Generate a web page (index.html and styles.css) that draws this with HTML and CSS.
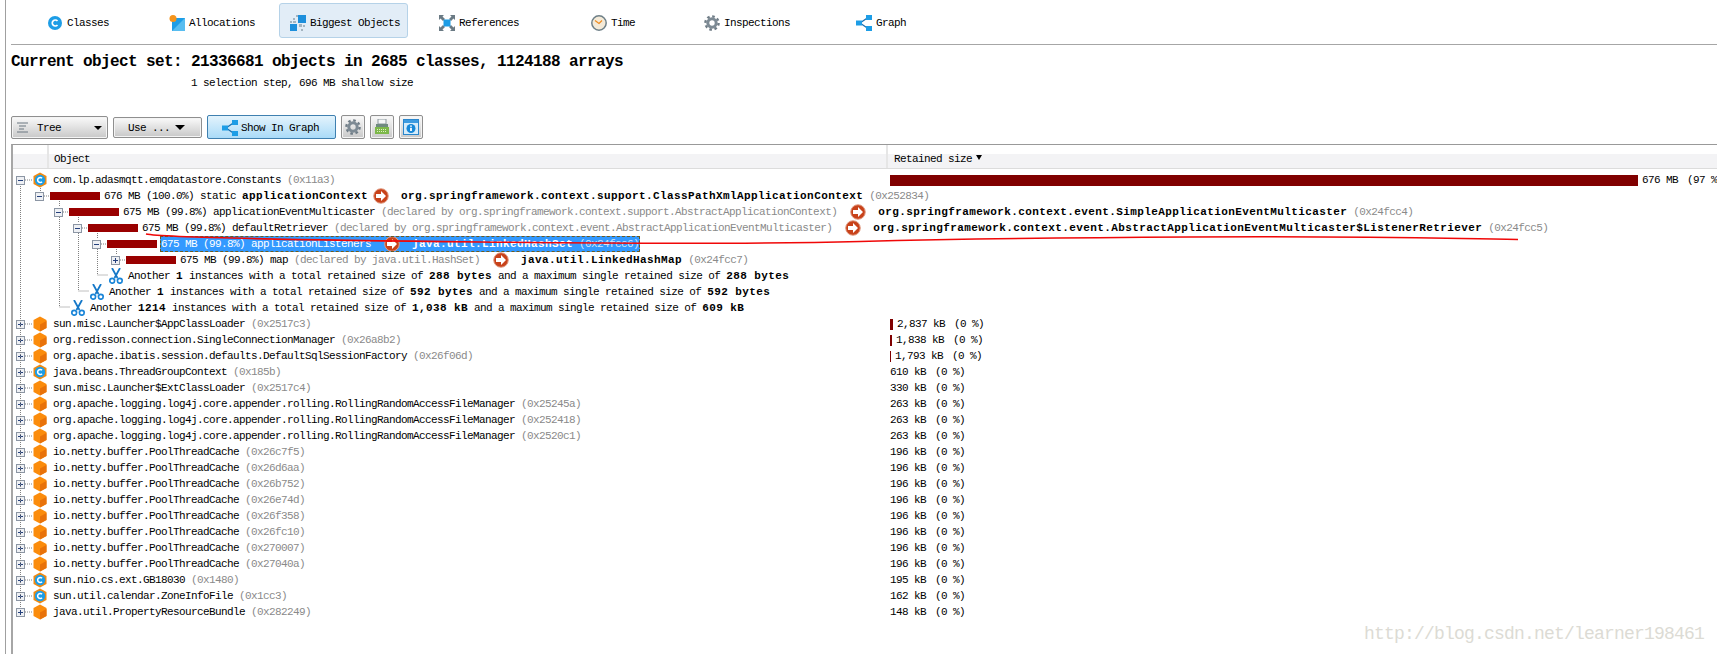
FILE: index.html
```html
<!doctype html>
<html>
	<head>
		<title>Biggest Objects</title>
		<meta charset="utf8">
		<link rel="stylesheet" href="styles.css">
	</head>
	<body>
		<svg class="defs">
			<symbol id="class-hex" viewBox="0 0 16 16">
				<path d="M8 .5 14.5 4v8L8 15.5 1.500 12V4z" fill="#f08a12"/>
				<circle cx="8" cy="8" r="5.200" fill="#1d9de6"/>
				<path d="M10 6.300A2.500 2.500 0 1 0 10 9.700" fill="none" stroke="#fff" stroke-width="1.600"/>
			</symbol>
			<symbol id="cube" viewBox="0 0 16 16">
				<path d="M8 .5 14.500 4v8L8 15.500 1.500 12V4z" fill="#fb8c0c"/>
				<path d="M14.500 5 8 8.500v7l6.500-3.500z" fill="#e8720a"/>
			</symbol>
			<symbol id="scissors" viewBox="0 0 16 16">
				<path d="M4 0 9.500 10M12 0 6.500 10" fill="none" stroke="#1578c8" stroke-width="1.800"/>
				<circle cx="4.200" cy="12.800" r="2.400" fill="#fff" stroke="#1c86d8" stroke-width="1.700"/>
				<circle cx="11.800" cy="12.800" r="2.400" fill="#fff" stroke="#1c86d8" stroke-width="1.700"/>
			</symbol>
			<symbol id="ref-arrow" viewBox="0 0 16 16">
				<circle cx="8" cy="8" r="7.300" fill="#c8421a" stroke="#e2a088" stroke-width="1"/>
				<path d="M3 6h5V3l5 5-5 5v-3H3z" fill="#fff"/>
			</symbol>
			<symbol id="minus" viewBox="0 0 9 9">
				<rect x=".5" y=".5" width="8" height="8" fill="#eef0f4" stroke="#8c96a4"/>
				<path d="M2 4.500h5" stroke="#24407c"/>
			</symbol>
			<symbol id="plus" viewBox="0 0 9 9">
				<rect x=".5" y=".5" width="8" height="8" fill="#eef0f4" stroke="#8c96a4"/>
				<path d="M2 4.500h5M4.500 2v5" stroke="#24407c"/>
			</symbol>
			<symbol id="gear" viewBox="0 0 16 16">
				<circle cx="8" cy="8" r="6.600" fill="none" stroke="#6f7c86" stroke-width="2.400" stroke-dasharray="2.600 2.580"/>
				<circle cx="8" cy="8" r="4.200" fill="none" stroke="#7d8a94" stroke-width="3"/>
			</symbol>
			<symbol id="graph" viewBox="0 0 16 16">
				<path d="M4 8 12 2.500M4 8 12 13.500" stroke="#1a6fb0" stroke-width="1.300"/>
				<rect x="0" y="5.500" width="6" height="5" fill="#1d9de6"/>
				<rect x="10" y="0" width="6" height="5" fill="#1d9de6"/>
				<rect x="10" y="11" width="6" height="5" fill="#1d9de6"/>
			</symbol>
		</svg>

		<div class="window">
			<div class="tabs">
				<a class="tab tab-classes">
					<svg class="icon" viewBox="0 0 16 16"><circle cx="8" cy="8" r="7" fill="#1d9de6"/><path d="M10.500 6A3 3 0 1 0 10.500 10" fill="none" stroke="#fff" stroke-width="1.700"/></svg>
					Classes
				</a>
				<a class="tab tab-allocations">
					<svg class="icon" viewBox="0 0 16 16"><rect x="3" y="3" width="13" height="13" fill="#1d9de6"/><path d="M16 3v13H3z" fill="#58bdf0"/><circle cx="4" cy="3.500" r="3.500" fill="#f5941c"/></svg>
					Allocations
				</a>
				<a class="tab tab-biggest active">
					<svg class="icon" viewBox="0 0 16 16"><rect x="8" y="0" width="8" height="8" fill="#1d8fdc"/><rect x="0" y="9" width="7" height="7" fill="#1d8fdc"/><path d="M3 3h2v2H3zM6 0h2v2H6zM0 6h2v2H0zM3 6h3v2H3zM9 9h3v3H9zM13 10h2v2h-2zM11 14h2v2h-2z" fill="#a4b4c0"/></svg>
					Biggest Objects
				</a>
				<a class="tab tab-references">
					<svg class="icon" viewBox="0 0 16 16"><path d="M0 0h5L3.500 1.500 6 4 4 6 1.500 3.500 0 5zM16 0v5l-1.500-1.500L12 6l-2-2 2.500-2.500L11 0zM0 16v-5l1.500 1.500L4 10l2 2-2.500 2.500L5 16zM16 16h-5l1.500-1.500L10 12l2-2 2.500 2.500L16 11z" fill="#6a7a84"/><rect x="4.500" y="4.500" width="7" height="7" rx="1" fill="#1d9de6"/></svg>
					References
				</a>
				<a class="tab tab-time">
					<svg class="icon" viewBox="0 0 16 16"><circle cx="8" cy="8" r="7.200" fill="#f4ead8" stroke="#6f8088" stroke-width="1.500"/><path d="M4 5.500 8 8.500 11 5.500" fill="none" stroke="#ee8c20" stroke-width="1.200"/></svg>
					Time
				</a>
				<a class="tab tab-inspections">
					<svg class="icon"><use href="#gear"/></svg>
					Inspections
				</a>
				<a class="tab tab-graph">
					<svg class="icon"><use href="#graph"/></svg>
					Graph
				</a>
			</div>

			<h1 class="title">Current object set: 21336681 objects in 2685 classes, 1124188 arrays</h1>
			<p class="subtitle">1 selection step, 696 MB shallow size</p>

			<div class="toolbar">
				<button class="btn combo combo-tree">
					<svg class="small-icon" viewBox="0 0 12 12"><path d="M0 1h11M2 4h7M2 7h5M0 10h11" stroke="#6a7680"/></svg>
					<span>Tree</span>
					<i class="caret"></i>
				</button>
				<button class="btn combo combo-use">
					<span>Use ...</span>
					<i class="caret big"></i>
				</button>
				<button class="btn show-graph">
					<svg class="icon"><use href="#graph"/></svg>
					Show In Graph
				</button>
				<button class="btn square"><svg class="icon"><use href="#gear"/></svg></button>
				<button class="btn square">
					<svg class="icon" viewBox="0 0 16 16"><path d="M4 0h8v5H4z" fill="#f4f6f6" stroke="#8a969c"/><path d="M2 5h12v3H2z" fill="#6f8a80"/><path d="M1 8h14v7H1z" fill="#7db84a"/><path d="M3 10.500h10M3 12.500h10" stroke="#e0f0c8" stroke-dasharray="1 1"/></svg>
				</button>
				<button class="btn square">
					<svg class="icon" viewBox="0 0 16 16"><rect x=".5" y=".5" width="15" height="15" fill="#d6ecfa" stroke="#2a86cc"/><rect x="1" y="1" width="14" height="3" fill="#3d9be0"/><circle cx="8" cy="9.500" r="4.500" fill="#1788d8"/><path d="M8 6.500v1.200M8 8.700v3.300" stroke="#fff" stroke-width="1.800"/></svg>
				</button>
			</div>

			<div class="table">
				<div class="head">
					<span class="head-gutter"></span>
					<span class="head-object">Object</span>
					<span class="head-size">Retained size <i class="sort"></i></span>
				</div>

				<div class="rows">
					<div class="row">
						<div class="tree d0"><svg class="exp"><use href="#minus"/></svg><svg class="icon node"><use href="#class-hex"/></svg><span>com.lp.adasmqtt.emqdatastore.Constants <span class="addr">(0x11a3)</span></span></div>
						<div class="size"><i class="bar" style="width: 748px"></i><span>676 MB <span class="pct">(97 %)</span></span></div>
					</div>
					<div class="row">
						<div class="tree d1"><svg class="exp"><use href="#minus"/></svg><i class="inline-bar"></i><span>676 MB (100.0%) static <b>applicationContext</b></span><svg class="ref after-bold"><use href="#ref-arrow"/></svg><span><b>org.springframework.context.support.ClassPathXmlApplicationContext</b> <span class="addr">(0x252834)</span></span></div>
					</div>
					<div class="row">
						<div class="tree d2"><svg class="exp"><use href="#minus"/></svg><i class="inline-bar"></i><span>675 MB (99.8%) applicationEventMulticaster <span class="addr">(declared by org.springframework.context.support.AbstractApplicationContext)</span></span><svg class="ref"><use href="#ref-arrow"/></svg><span><b>org.springframework.context.event.SimpleApplicationEventMulticaster</b> <span class="addr">(0x24fcc4)</span></span></div>
					</div>
					<div class="row">
						<div class="tree d3"><svg class="exp"><use href="#minus"/></svg><i class="inline-bar"></i><span>675 MB (99.8%) defaultRetriever <span class="addr">(declared by org.springframework.context.event.AbstractApplicationEventMulticaster)</span></span><svg class="ref"><use href="#ref-arrow"/></svg><span><b>org.springframework.context.event.AbstractApplicationEventMulticaster$ListenerRetriever</b> <span class="addr">(0x24fcc5)</span></span></div>
					</div>
					<div class="row">
						<div class="tree d4"><svg class="exp"><use href="#minus"/></svg><i class="inline-bar"></i><div class="selected"><span>675 MB (99.8%) applicationListeners</span><svg class="ref"><use href="#ref-arrow"/></svg><span><b>java.util.LinkedHashSet</b> <span class="addr">(0x24fcc6)</span></span></div></div>
					</div>
					<div class="row">
						<div class="tree d5"><svg class="exp"><use href="#plus"/></svg><i class="inline-bar"></i><span>675 MB (99.8%) map <span class="addr">(declared by java.util.HashSet)</span></span><svg class="ref"><use href="#ref-arrow"/></svg><span><b>java.util.LinkedHashMap</b> <span class="addr">(0x24fcc7)</span></span></div>
					</div>
					<div class="row">
						<div class="tree d5"><svg class="icon cut"><use href="#scissors"/></svg><span>Another <b>1</b> instances with a total retained size of <b>288 bytes</b> and a maximum single retained size of <b>288 bytes</b></span></div>
					</div>
					<div class="row">
						<div class="tree d4"><svg class="icon cut"><use href="#scissors"/></svg><span>Another <b>1</b> instances with a total retained size of <b>592 bytes</b> and a maximum single retained size of <b>592 bytes</b></span></div>
					</div>
					<div class="row">
						<div class="tree d3"><svg class="icon cut"><use href="#scissors"/></svg><span>Another <b>1214</b> instances with a total retained size of <b>1,038 kB</b> and a maximum single retained size of <b>609 kB</b></span></div>
					</div>
					<div class="row">
						<div class="tree d0"><svg class="exp"><use href="#plus"/></svg><svg class="icon node"><use href="#cube"/></svg><span>sun.misc.Launcher$AppClassLoader <span class="addr">(0x2517c3)</span></span></div>
						<div class="size"><i class="bar" style="width: 3px"></i><span>2,837 kB <span class="pct">(0 %)</span></span></div>
					</div>
					<div class="row">
						<div class="tree d0"><svg class="exp"><use href="#plus"/></svg><svg class="icon node"><use href="#cube"/></svg><span>org.redisson.connection.SingleConnectionManager <span class="addr">(0x26a8b2)</span></span></div>
						<div class="size"><i class="bar" style="width: 2px"></i><span>1,838 kB <span class="pct">(0 %)</span></span></div>
					</div>
					<div class="row">
						<div class="tree d0"><svg class="exp"><use href="#plus"/></svg><svg class="icon node"><use href="#cube"/></svg><span>org.apache.ibatis.session.defaults.DefaultSqlSessionFactory <span class="addr">(0x26f06d)</span></span></div>
						<div class="size"><i class="bar" style="width: 1px"></i><span>1,793 kB <span class="pct">(0 %)</span></span></div>
					</div>
					<div class="row">
						<div class="tree d0"><svg class="exp"><use href="#plus"/></svg><svg class="icon node"><use href="#class-hex"/></svg><span>java.beans.ThreadGroupContext <span class="addr">(0x185b)</span></span></div>
						<div class="size"><span>610 kB <span class="pct">(0 %)</span></span></div>
					</div>
					<div class="row">
						<div class="tree d0"><svg class="exp"><use href="#plus"/></svg><svg class="icon node"><use href="#cube"/></svg><span>sun.misc.Launcher$ExtClassLoader <span class="addr">(0x2517c4)</span></span></div>
						<div class="size"><span>330 kB <span class="pct">(0 %)</span></span></div>
					</div>
					<div class="row">
						<div class="tree d0"><svg class="exp"><use href="#plus"/></svg><svg class="icon node"><use href="#cube"/></svg><span>org.apache.logging.log4j.core.appender.rolling.RollingRandomAccessFileManager <span class="addr">(0x25245a)</span></span></div>
						<div class="size"><span>263 kB <span class="pct">(0 %)</span></span></div>
					</div>
					<div class="row">
						<div class="tree d0"><svg class="exp"><use href="#plus"/></svg><svg class="icon node"><use href="#cube"/></svg><span>org.apache.logging.log4j.core.appender.rolling.RollingRandomAccessFileManager <span class="addr">(0x252418)</span></span></div>
						<div class="size"><span>263 kB <span class="pct">(0 %)</span></span></div>
					</div>
					<div class="row">
						<div class="tree d0"><svg class="exp"><use href="#plus"/></svg><svg class="icon node"><use href="#cube"/></svg><span>org.apache.logging.log4j.core.appender.rolling.RollingRandomAccessFileManager <span class="addr">(0x2520c1)</span></span></div>
						<div class="size"><span>263 kB <span class="pct">(0 %)</span></span></div>
					</div>
					<div class="row">
						<div class="tree d0"><svg class="exp"><use href="#plus"/></svg><svg class="icon node"><use href="#cube"/></svg><span>io.netty.buffer.PoolThreadCache <span class="addr">(0x26c7f5)</span></span></div>
						<div class="size"><span>196 kB <span class="pct">(0 %)</span></span></div>
					</div>
					<div class="row">
						<div class="tree d0"><svg class="exp"><use href="#plus"/></svg><svg class="icon node"><use href="#cube"/></svg><span>io.netty.buffer.PoolThreadCache <span class="addr">(0x26d6aa)</span></span></div>
						<div class="size"><span>196 kB <span class="pct">(0 %)</span></span></div>
					</div>
					<div class="row">
						<div class="tree d0"><svg class="exp"><use href="#plus"/></svg><svg class="icon node"><use href="#cube"/></svg><span>io.netty.buffer.PoolThreadCache <span class="addr">(0x26b752)</span></span></div>
						<div class="size"><span>196 kB <span class="pct">(0 %)</span></span></div>
					</div>
					<div class="row">
						<div class="tree d0"><svg class="exp"><use href="#plus"/></svg><svg class="icon node"><use href="#cube"/></svg><span>io.netty.buffer.PoolThreadCache <span class="addr">(0x26e74d)</span></span></div>
						<div class="size"><span>196 kB <span class="pct">(0 %)</span></span></div>
					</div>
					<div class="row">
						<div class="tree d0"><svg class="exp"><use href="#plus"/></svg><svg class="icon node"><use href="#cube"/></svg><span>io.netty.buffer.PoolThreadCache <span class="addr">(0x26f358)</span></span></div>
						<div class="size"><span>196 kB <span class="pct">(0 %)</span></span></div>
					</div>
					<div class="row">
						<div class="tree d0"><svg class="exp"><use href="#plus"/></svg><svg class="icon node"><use href="#cube"/></svg><span>io.netty.buffer.PoolThreadCache <span class="addr">(0x26fc10)</span></span></div>
						<div class="size"><span>196 kB <span class="pct">(0 %)</span></span></div>
					</div>
					<div class="row">
						<div class="tree d0"><svg class="exp"><use href="#plus"/></svg><svg class="icon node"><use href="#cube"/></svg><span>io.netty.buffer.PoolThreadCache <span class="addr">(0x270007)</span></span></div>
						<div class="size"><span>196 kB <span class="pct">(0 %)</span></span></div>
					</div>
					<div class="row">
						<div class="tree d0"><svg class="exp"><use href="#plus"/></svg><svg class="icon node"><use href="#cube"/></svg><span>io.netty.buffer.PoolThreadCache <span class="addr">(0x27040a)</span></span></div>
						<div class="size"><span>196 kB <span class="pct">(0 %)</span></span></div>
					</div>
					<div class="row">
						<div class="tree d0"><svg class="exp"><use href="#plus"/></svg><svg class="icon node"><use href="#class-hex"/></svg><span>sun.nio.cs.ext.GB18030 <span class="addr">(0x1480)</span></span></div>
						<div class="size"><span>195 kB <span class="pct">(0 %)</span></span></div>
					</div>
					<div class="row">
						<div class="tree d0"><svg class="exp"><use href="#plus"/></svg><svg class="icon node"><use href="#class-hex"/></svg><span>sun.util.calendar.ZoneInfoFile <span class="addr">(0x1cc3)</span></span></div>
						<div class="size"><span>162 kB <span class="pct">(0 %)</span></span></div>
					</div>
					<div class="row">
						<div class="tree d0"><svg class="exp"><use href="#plus"/></svg><svg class="icon node"><use href="#cube"/></svg><span>java.util.PropertyResourceBundle <span class="addr">(0x282249)</span></span></div>
						<div class="size"><span>148 kB <span class="pct">(0 %)</span></span></div>
					</div>
				</div>
			</div>
		</div>

		<!-- tree guides and the red pen stroke drawn over the screenshot -->
		<svg class="overlay">
			<path class="guides" d="M20.500 186V607M25 180H33M25 324H33M25 340H33M25 356H33M25 372H33M25 388H33M25 404H33M25 420H33M25 436H33M25 452H33M25 468H33M25 484H33M25 500H33M25 516H33M25 532H33M25 548H33M25 564H33M25 580H33M25 596H33M25 612H33M40.500 188V191M44 196H50M59.500 201V207M59.500 217V307H70M63 212H69M78.500 217V223M78.500 233V291H89M82 228H88M97.500 233V239M97.500 249V275H108M101 244H107M116.500 249V255M120 260H126"/>
			<path class="pen" d="M146 234C160 237 300 240 480 242S800 243 860 241.500 1000 238 1188 237 1420 238 1518 239.500"/>
		</svg>

		<div class="watermark">http://blog.csdn.net/learner198461</div>
	</body>
</html>
```

FILE: styles.css
```css
html,body {
	margin: 0;
	height: 100%;
	background-color: #fff;
	overflow: hidden;
}
body {
	position: relative;
	font: 11px/16px "Liberation Mono", monospace;
	letter-spacing: -0.6px;
	color: #000;
}
b {
	font-weight: bold;
	letter-spacing: 0.4px;
}
svg {
	display: block;
	flex: none;
}
.defs {
	position: absolute;
	width: 0;
	height: 0;
}
.window {
	box-sizing: border-box;
	height: 100%;
	margin-left: 5px;
	border-left: 1px solid #a0a0a0;
	padding-left: 5px;
	display: flex;
	flex-direction: column;
}
.icon {
	width: 16px;
	height: 16px;
}

/* tabs */
.tabs {
	display: flex;
	height: 44px;
	border-bottom: 1px solid #a6a6a6;
	padding-left: 25px;
}
.tab {
	box-sizing: border-box;
	display: flex;
	align-items: center;
	gap: 4px;
	height: 35px;
	margin-top: 3px;
	padding: 5px 0 0 10px;
	border: 1px solid transparent;
	border-radius: 3px;
}
.tab-classes { width: 122px; }
.tab-allocations { width: 121px; }
.tab-biggest { width: 129px; margin-right: 20px; }
.tab-references { width: 152px; }
.tab-time { width: 113px; }
.tab-inspections { width: 152px; }
.active {
	background-color: #e2edf7;
	border-color: #b5d2e8;
}

.title {
	margin: 7px 0 0;
	font-size: 16px;
	line-height: 20px;
	letter-spacing: -0.6px;
}
.subtitle {
	margin: 3px 0 0 180px;
}

/* toolbar */
.toolbar {
	display: flex;
	align-items: center;
	gap: 5px;
	height: 24px;
	margin-top: 24px;
}
.btn {
	box-sizing: border-box;
	display: flex;
	align-items: center;
	height: 23px;
	padding: 1px 0 0;
	font: inherit;
	letter-spacing: inherit;
	color: #000;
	border: 1px solid #8f8f8f;
	border-radius: 2px;
	background: linear-gradient(#fafafa, #c8c8c8);
	box-shadow: inset 0 0 0 1px #f4f4f4;
}
.combo-tree {
	width: 97px;
	padding-left: 5px;
}
.combo-tree span {
	margin-left: 8px;
}
.combo-use {
	width: 89px;
	height: 21px;
	padding-left: 14px;
}
.small-icon {
	width: 12px;
	height: 12px;
}
.caret {
	margin-left: auto;
	margin-right: 5px;
	border-style: solid;
	border-width: 4px 4px 0;
	border-color: #000 transparent transparent;
}
.caret.big {
	margin-right: 16px;
	border-width: 5px 5px 0;
}
.show-graph {
	width: 129px;
	height: 24px;
	gap: 3px;
	padding-left: 14px;
	border-color: #3f80b0;
	background: linear-gradient(#e3f3fc, #aadbf8);
	box-shadow: none;
}
.square {
	justify-content: center;
	width: 24px;
	height: 24px;
	padding-top: 0;
}

/* table */
.table {
	flex: 1;
	margin-top: 5px;
	border-top: 1px solid #999;
	border-left: 2px solid #a6a6a6;
}
.head {
	display: flex;
	height: 23px;
	line-height: 28px;
	border-bottom: 1px solid #dcdcdc;
	background: linear-gradient(#fff 9px, #f3f3f5 9px);
}
.head-gutter {
	width: 34px;
	border-right: 2px solid #e6e6e6;
}
.head-object {
	width: 832px;
	padding-left: 5px;
	border-right: 2px solid #e6e6e6;
}
.head-size {
	padding-left: 6px;
}
.sort {
	display: inline-block;
	margin-left: -2px;
	vertical-align: 2px;
	border-style: solid;
	border-width: 5px 3.500px 0;
	border-color: #000 transparent transparent;
}
.rows {
	padding-top: 3px;
}
.row {
	display: flex;
	height: 16px;
	white-space: pre;
}
.tree {
	display: flex;
	align-items: center;
	flex: none;
	width: 875px;
	box-sizing: border-box;
}
.d0 { padding-left: 3px; }
.d1 { padding-left: 22px; }
.d2 { padding-left: 41px; }
.d3 { padding-left: 60px; }
.d4 { padding-left: 79px; }
.d5 { padding-left: 98px; }
.exp {
	width: 9px;
	height: 9px;
}
.node {
	margin: 0 5px 0 7px;
}
.cut {
	margin: 0 4px 0 -3px;
}
.inline-bar {
	flex: none;
	width: 50px;
	height: 8px;
	margin: 0 4px 0 6px;
	background-color: #990000;
}
.ref {
	width: 16px;
	height: 16px;
	margin: 0 12px 0 13px;
}
.ref.after-bold {
	margin-left: 5px;
}
.addr {
	color: #8a8a8a;
}
.selected {
	display: flex;
	align-items: center;
	box-sizing: border-box;
	height: 16px;
	margin-left: -1px;
	padding: 0 1px;
	color: #fff;
	background-color: #3399ff;
	outline: 1px dashed #6b5a20;
	outline-offset: -1px;
}
.selected .addr {
	color: #cfe4fa;
}
.size {
	display: flex;
	align-items: center;
	gap: 4px;
	margin-left: 2px;
}
.bar {
	height: 11px;
	background-color: #800000;
}
.pct {
	margin-left: 3px;
}

/* over the page */
.overlay {
	position: absolute;
	top: 0;
	left: 0;
	width: 1717px;
	height: 654px;
	pointer-events: none;
}
.guides {
	fill: none;
	stroke: #808080;
	stroke-dasharray: 1 1;
}
.pen {
	fill: none;
	stroke: #f00808;
	stroke-width: 1.600;
}
.watermark {
	position: absolute;
	top: 622px;
	left: 1364px;
	font-size: 18px;
	line-height: 24px;
	letter-spacing: -0.8px;
	color: #dcdbd4;
}
```
